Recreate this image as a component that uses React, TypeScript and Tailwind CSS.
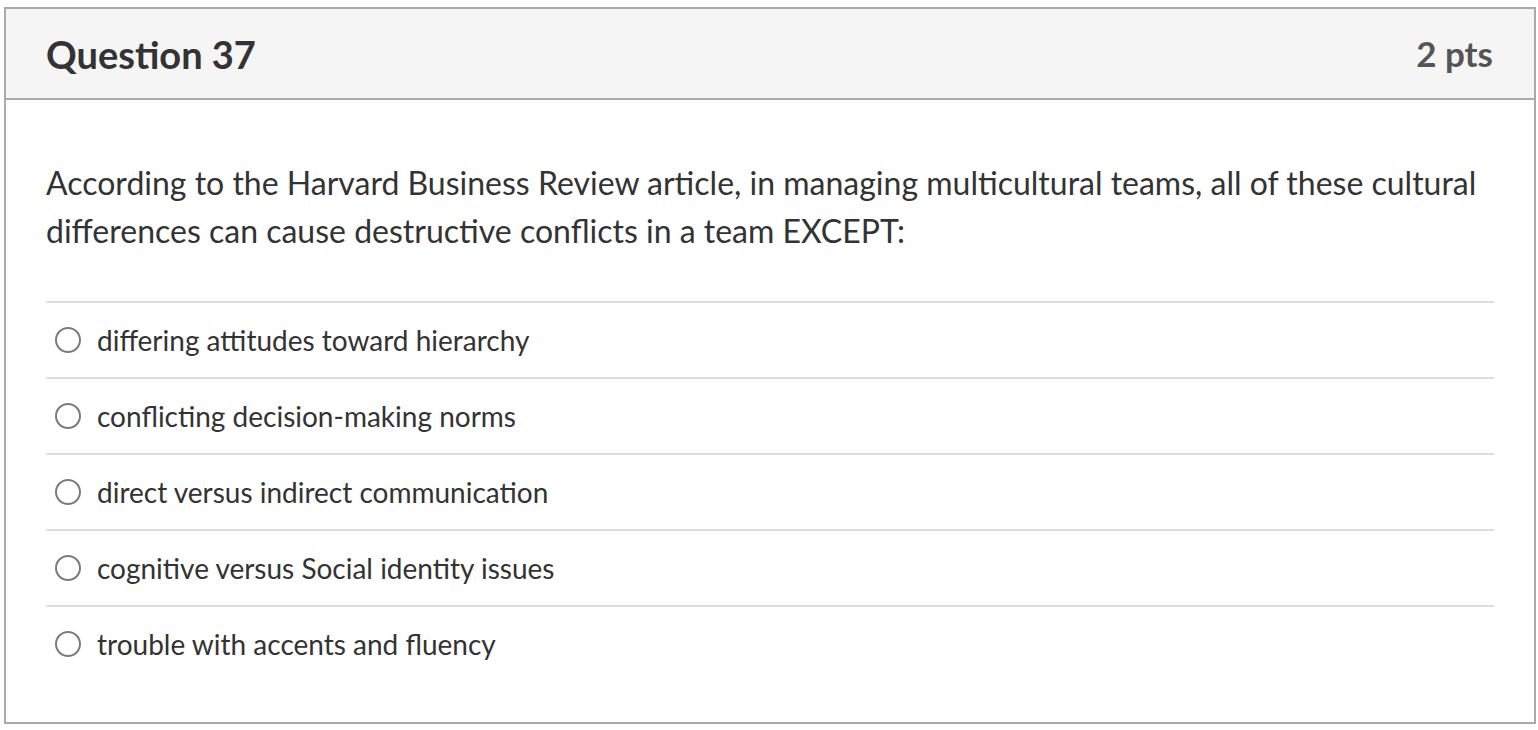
import React from "react";

const answers = [
  "differing attitudes toward hierarchy",
  "conflicting decision-making norms",
  "direct versus indirect communication",
  "cognitive versus Social identity issues",
  "trouble with accents and fluency",
];

function Radio() {
  return (
    <span className="shrink-0 w-[26px] h-[26px] rounded-full border-2 border-[#7a7a7a] bg-white" />
  );
}

export default function App() {
  return (
    <div className="min-h-screen bg-white pt-[7px] pl-[4px] font-['Lato','Open_Sans',sans-serif]">
      <div className="w-[1532px] border-2 border-[#aaaaaa] bg-white">
        <div className="h-[91px] bg-[#f5f5f5] border-b-2 border-[#aaaaaa] flex items-center justify-between pl-[40px] pr-[41px]">
          <h2 className="text-[38px] font-bold text-[#333333] leading-none">Question 37</h2>
          <span className="text-[35px] font-bold text-[#555555] leading-none">2 pts</span>
        </div>
        <div className="px-[40px] pt-[59px] pb-[41px]">
          <p className="text-[32px] leading-[48px] text-[#333333]">
            According to the Harvard Business Review article, in managing multicultural teams, all of these cultural differences can cause destructive conflicts in a team EXCEPT:
          </p>
          <div className="mt-[46px]">
            {answers.map((a) => (
              <div
                key={a}
                className="h-[76px] border-t-2 border-[#dddddd] flex items-center pl-[9px] gap-[16px]"
              >
                <Radio />
                <span className="text-[28px] text-[#333333] leading-none">{a}</span>
              </div>
            ))}
          </div>
        </div>
      </div>
    </div>
  );
}
